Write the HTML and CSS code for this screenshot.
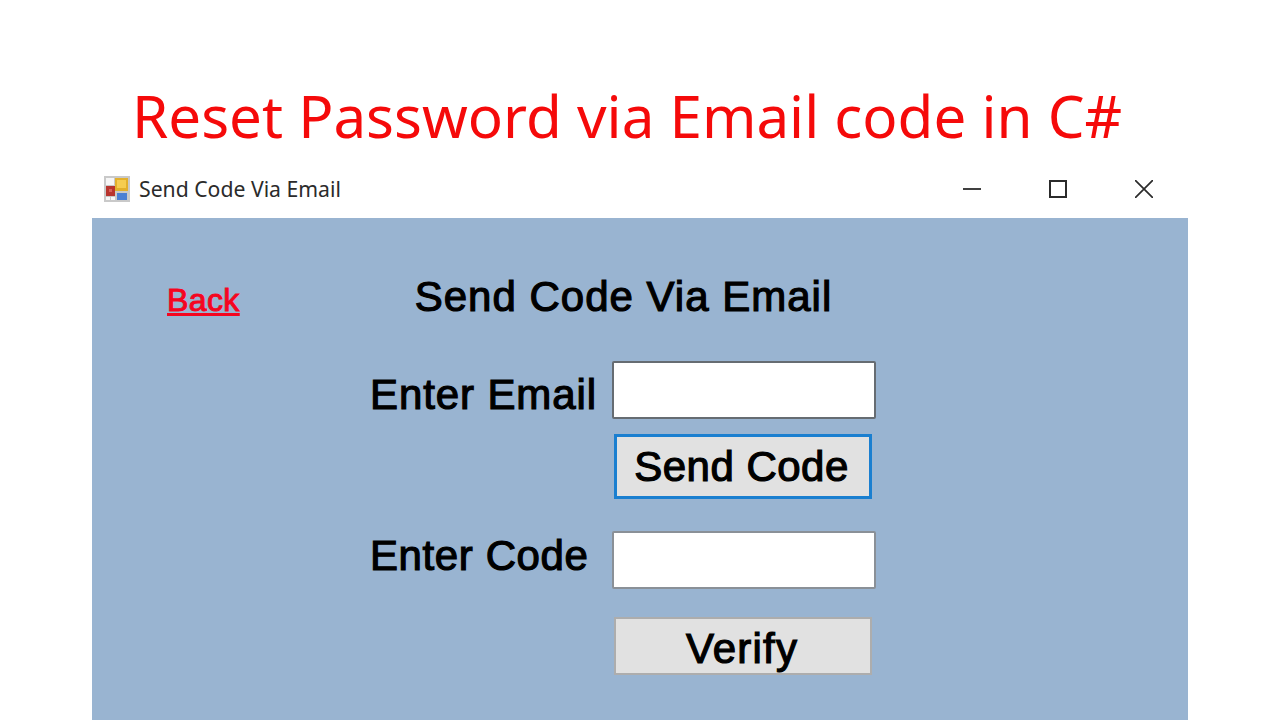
FILE: index.html
```html
<!DOCTYPE html>
<html lang="en">
<head>
<meta charset="utf-8">
<title>Reset Password via Email code in C#</title>
<link rel="stylesheet" href="styles.css">
</head>
<body>
<h1 class="headline">Reset Password via Email code in C#</h1>
<div class="window">
  <div class="titlebar">
    <svg class="app-icon" viewBox="0 0 26 26" aria-hidden="true">
      <rect x="0" y="0" width="26" height="26" fill="#c9c9c9"/>
      <rect x="2" y="2" width="8" height="7" fill="#f6f6f6"/>
      <rect x="2" y="21" width="4" height="3" fill="#f6f6f6"/>
      <rect x="7" y="21" width="4" height="3" fill="#f6f6f6"/>
      <rect x="2" y="10" width="9" height="10" fill="#b8342e"/>
      <rect x="5" y="13" width="3" height="3" fill="#d9605a"/>
      <rect x="11" y="2" width="13" height="13" fill="#e3b02c"/>
      <rect x="13" y="4" width="9" height="8" fill="#f6cd50"/>
      <rect x="13" y="17" width="10" height="7" fill="#4a7fd4"/>
    </svg>
    <span class="window-title">Send Code Via Email</span>
    <div class="window-controls">
      <svg class="ctl" viewBox="0 0 18 18" aria-hidden="true"><path d="M0 9H18" stroke="#2b2b2b" stroke-width="1.8" fill="none"/></svg>
      <svg class="ctl" viewBox="0 0 18 18" aria-hidden="true"><rect x="1" y="1" width="16" height="16" stroke="#2b2b2b" stroke-width="2" fill="none"/></svg>
      <svg class="ctl" viewBox="0 0 18 18" aria-hidden="true"><path d="M0 0L18 18M18 0L0 18" stroke="#2b2b2b" stroke-width="1.7" fill="none"/></svg>
    </div>
  </div>
  <div class="form">
    <div class="form-head">
      <a class="back" href="#">Back</a>
      <h2 class="form-title">Send Code Via Email</h2>
    </div>
    <div class="fields">
      <label class="lbl lbl-email">Enter Email</label>
      <div class="input input-email"></div>
      <div class="btn btn-focus">Send Code</div>
      <label class="lbl lbl-code">Enter Code</label>
      <div class="input input-code"></div>
      <div class="btn btn-verify">Verify</div>
    </div>
  </div>
</div>
</body>
</html>
```

FILE: styles.css
```css
* { box-sizing: border-box; }
html, body { margin: 0; height: 720px; overflow: hidden; background: #fff; }
body { font-family: "Liberation Sans", Arial, sans-serif; color: #000; }

.headline {
  margin: 0;
  height: 167px;
  padding: 77px 0 0 132px;
  font-family: "Noto Sans", sans-serif;
  font-weight: 400;
  font-size: 58.3px;
  line-height: 78px;
  color: #f50a0a;
  white-space: nowrap;
}

.window { margin: 0 92px; height: 553px; display: flex; flex-direction: column; }

.titlebar { height: 51px; flex: none; display: flex; align-items: center; padding: 0 35px 7px 12px; background: #fff; }
.app-icon { width: 26px; height: 26px; flex: none; }
.window-title { margin: 0 0 2px 9px; font-family: "Noto Sans", sans-serif; font-size: 21.2px; color: #2b2b2b; }
.window-controls { margin-left: auto; display: flex; gap: 68px; }
.ctl { width: 18px; height: 18px; display: block; }

.form { flex: 1; background: #99b4d1; display: flex; flex-direction: column; }

.form-head { height: 143px; flex: none; display: flex; align-items: flex-start; padding: 0 0 0 75px; }
.back { margin-top: 65px; font-size: 32px; line-height: 34px; letter-spacing: .4px; color: #f5051f; -webkit-text-stroke: 1px #f5051f; }
.form-title { margin: 56px 0 0 175px; font-size: 42px; line-height: 46px; font-weight: 400; letter-spacing: 1px; -webkit-text-stroke: 1.2px #000; white-space: nowrap; }

.fields {
  margin-left: 278px;
  display: grid;
  grid-template-columns: 242px 264px;
  grid-template-rows: 58px 15px 65px 32px 58px 28px 58px;
}
.lbl { font-size: 42px; line-height: 44px; letter-spacing: .9px; -webkit-text-stroke: 1.2px #000; white-space: nowrap; }
.lbl-email { grid-area: 1 / 1; margin-top: 12px; }
.lbl-code { grid-area: 5 / 1; margin-top: 3px; letter-spacing: .6px; }
.input { background: #fff; border: 2px solid #8a9097; border-radius: 2px; }
.input-email { grid-area: 1 / 2; border-color: #666c72; }
.input-code { grid-area: 5 / 2; }

.btn { display: flex; align-items: center; justify-content: center; margin: 0 4px 0 2px; background: #e1e1e1; font-size: 42px; -webkit-text-stroke: 1.2px #000; }
.btn-focus { grid-area: 3 / 2; border: 3px solid #1a7fd0; padding: 1px 3px 0 0; letter-spacing: .5px; }
.btn-verify { grid-area: 7 / 2; border: 2px solid #adadad; padding: 5px 2px 0 0; letter-spacing: 1.2px; }
```
